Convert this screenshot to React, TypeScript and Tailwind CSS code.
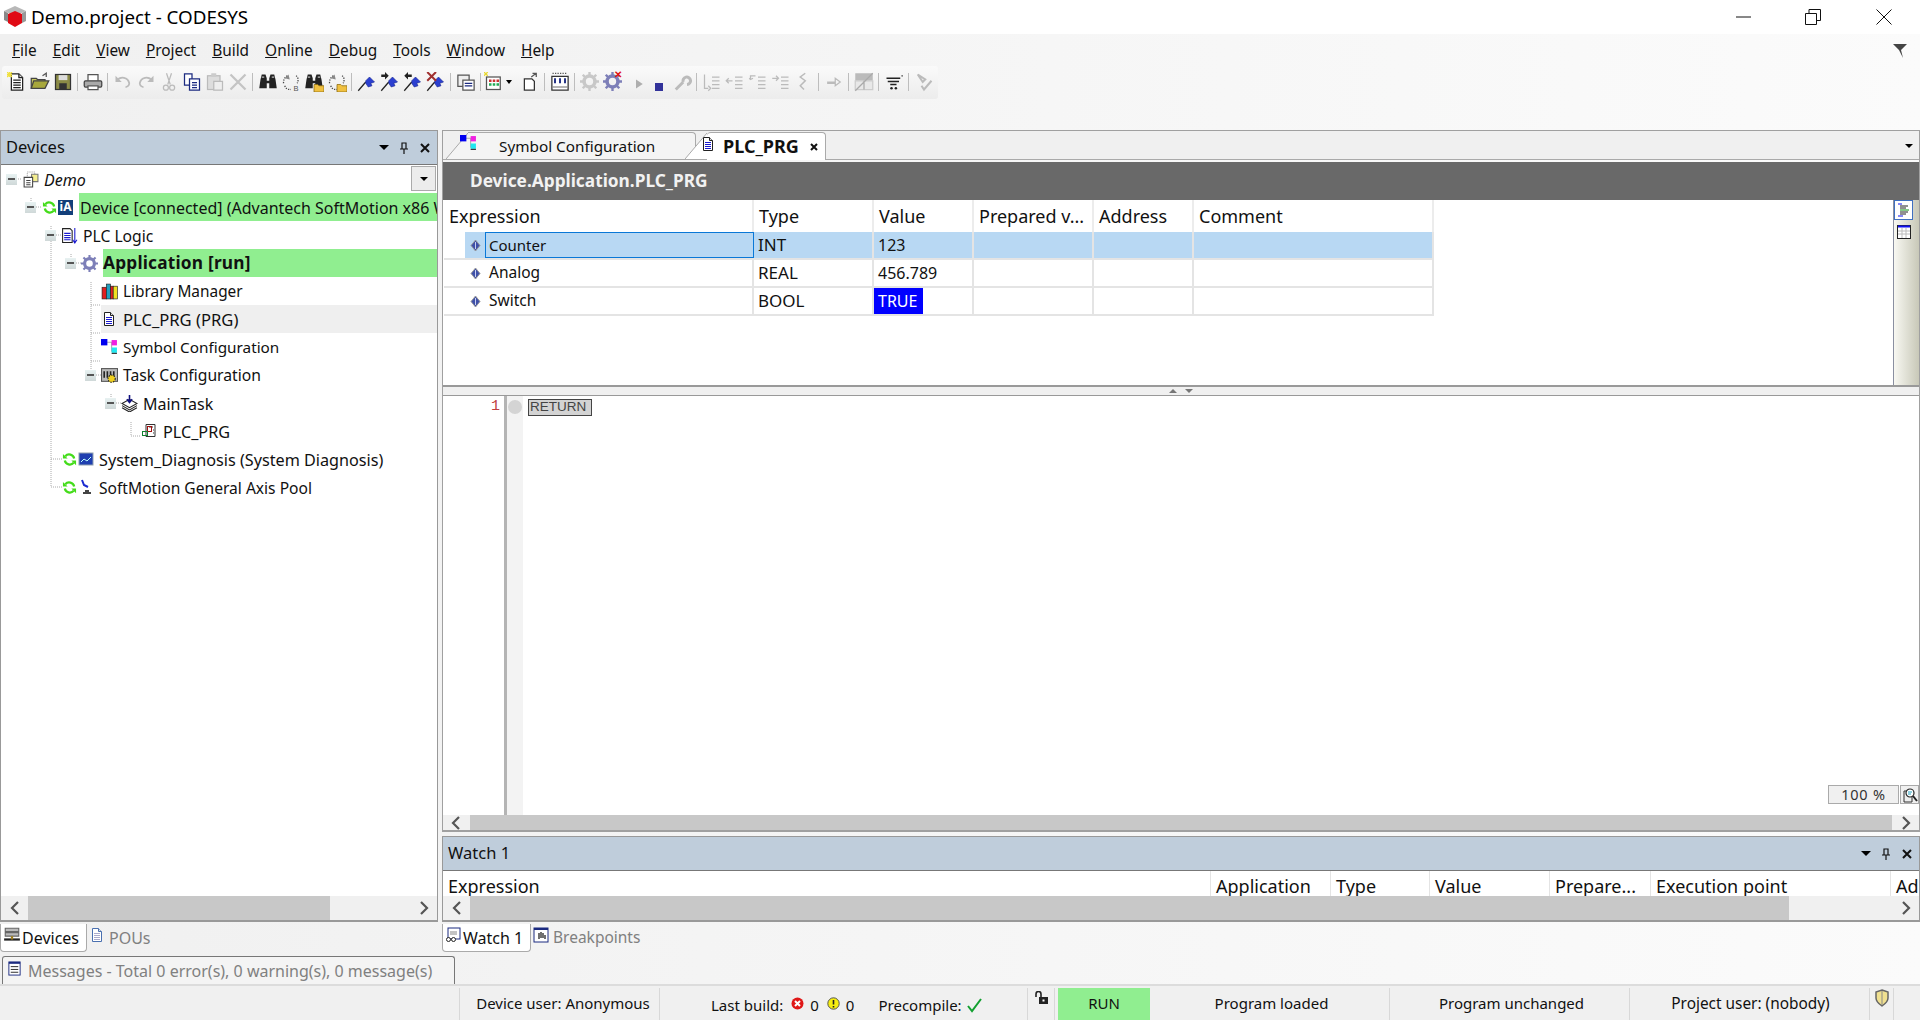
import React, { FC, ReactNode } from "react";

const FONT = "font-['Noto_Sans','Open_Sans',sans-serif]";

const Ic: FC<{ s?: number; children: ReactNode; className?: string }> = ({ s = 16, children, className }) => (
  <svg width={s} height={s} viewBox="0 0 16 16" className={"shrink-0 " + (className ?? "")}>
    {children}
  </svg>
);

const Page: FC<{ stroke?: string; lines?: string }> = ({ stroke = "#222", lines = "#222" }) => (
  <>
    <path d="M3.5 1.5h6l3 3v10h-9z" fill="#fff" stroke={stroke} />
    <path d="M9.5 1.5v3h3" fill="#ddd" stroke={stroke} />
    <path d="M5 6.5h6M5 8.5h6M5 10.5h6M5 12.5h6" stroke={lines} />
  </>
);

const Flag: FC<{ mark?: "next" | "prev" | "x" }> = ({ mark }) => (
  <Ic s={20}>
    <path d="M1 15L7 8" stroke="#222" strokeWidth="1" />
    <path d="M7 7l3-3 4 4-3 1 1 2-3 1-2-3z" fill="#2b3fd0" stroke="#1c2a90" strokeWidth=".5" />
    {mark === "next" && <path d="M1 2h3V0l3 3-3 3V4H1z" fill="#222" />}
    {mark === "prev" && <path d="M7 2H4V0L1 3l3 3V4h3z" fill="#222" />}
    {mark === "x" && <path d="M1 0l7 7M8 0L1 7" stroke="#a03030" strokeWidth="1.6" />}
  </Ic>
);

const Sync: FC = () => (
  <Ic s={15}>
    <path d="M13 7A5.5 5.5 0 0 0 3.5 4.5" fill="none" stroke="#44dc1a" strokeWidth="2.4" />
    <path d="M3 9a5.5 5.5 0 0 0 9.5 2.5" fill="none" stroke="#44dc1a" strokeWidth="2.4" />
    <path d="M1 2v5h5zM15 14V9h-5z" fill="#44dc1a" />
  </Ic>
);

const PageBlue = () => (
  <Ic>
    <Page lines="#1a1ad0" />
  </Ic>
);

const SymbolCfg = () => (
  <Ic s={17}>
    <path d="M4 3h8M10 3v9" stroke="#aaa" fill="none" />
    <rect x="0" y="0" width="6" height="6" fill="#0000f0" />
    <rect x="10" y="1" width="5" height="5" fill="#f020e0" />
    <rect x="10" y="8" width="5" height="5" fill="#20e8f0" />
    <rect x="10" y="13" width="5" height="1" fill="#222" />
  </Ic>
);

const Gear: FC<{ c?: string; s?: number }> = ({ c = "#7d7fb8", s = 17 }) => (
  <Ic s={s}>
    <circle cx="8" cy="8" r="4.6" fill="none" stroke={c} strokeWidth="3" />
    <path d="M8 0v3M8 13v3M0 8h3M13 8h3M2.3 2.3l2 2M11.7 11.7l2 2M2.3 13.7l2-2M11.7 4.3l2-2" stroke={c} strokeWidth="2" />
  </Ic>
);

const Disabled: FC<{ children: ReactNode }> = ({ children }) => <Ic s={20}>{children}</Ic>;

const Binocular: FC<{ folder?: boolean }> = ({ folder }) => (
  <Ic s={20}>
    <path d="M2 6l1-4h3l1 3v2h2V5l1-3h3l1 4 1 7H9V9H7v4H1z" fill="#222" />
    <path d="M3 4h2M11 4h2" stroke="#bbb" />
    {folder && <path d="M8 10h3l1 1h4v5H8z" fill="#f0c040" stroke="#8a6a10" strokeWidth=".6" />}
  </Ic>
);

const DotArrows: FC<{ folder?: boolean }> = ({ folder }) => (
  <Ic s={20}>
    <path d="M2 9c0-4 2-6 4-6M12 3c2 1 2 4 1 6M3 11c1 3 3 3 5 3" fill="none" stroke="#444" strokeDasharray="1 1" />
    <path d="M3 5l3-3 1 4z" fill="#888" />
    {folder ? (
      <path d="M8 10h3l1 1h4v5H8z" fill="#f0c040" stroke="#8a6a10" strokeWidth=".6" />
    ) : (
      <text x="10" y="15" fontSize="6" fill="#555" fontFamily="Liberation Sans">B</text>
    )}
  </Ic>
);

const LinesArrow: FC<{ d: string }> = ({ d }) => (
  <Disabled>
    <path d="M8 4h6M8 7h6M8 10h6M8 13h6" stroke="#bbb" />
    <path d={d} fill="none" stroke="#bbb" />
  </Disabled>
);

const tools: ReactNode[] = [
  <Ic s={20}><Page /><path d="M0 0l4 4M4 0L0 4M2 0v4M0 2h4" stroke="#f0e040" /></Ic>,
  <Ic s={20}><path d="M1 13V5h4l1 1h6v2" fill="#c8c860" stroke="#444" /><path d="M1 13l2-6h12l-3 6z" fill="#a8a83c" stroke="#444" /><path d="M10 3l3-2v3" fill="none" stroke="#555" /></Ic>,
  <Ic s={20}><rect x="2" y="2" width="12" height="12" fill="#8b8b46" stroke="#333" /><rect x="4.5" y="2.5" width="7" height="4" fill="#ddd" /><rect x="5" y="9" width="6" height="5" fill="#333" /></Ic>,
  "sep",
  <Ic s={20}><path d="M4 7V2h8v5" fill="#fff" stroke="#555" /><rect x="1" y="7" width="14" height="5" rx="1" fill="#aaa" stroke="#444" /><path d="M4 11h8v3H4z" fill="#fff" stroke="#555" /></Ic>,
  "sep",
  <Disabled><path d="M3 7c3-4 9-3 10 2 0 2-2 3-3 3" fill="none" stroke="#bbb" strokeWidth="1.4" /><path d="M2 3v5h5z" fill="#bbb" /></Disabled>,
  <Disabled><path d="M13 7c-3-4-9-3-10 2 0 2 2 3 3 3" fill="none" stroke="#bbb" strokeWidth="1.4" /><path d="M14 3v5H9z" fill="#bbb" /></Disabled>,
  <Disabled><path d="M6 1l3 9M10 1L7 10" stroke="#bbb" /><circle cx="5.5" cy="12.5" r="2" fill="none" stroke="#bbb" /><circle cx="10.5" cy="12.5" r="2" fill="none" stroke="#bbb" /></Disabled>,
  <Ic s={20}><path d="M2 1.5h6v9H2z" fill="#fff" stroke="#1b2a80" /><path d="M6 5.5h8v9H6z" fill="#fff" stroke="#1b2a80" /><path d="M8 8.5h4M8 10.5h4M8 12.5h4" stroke="#1b2a80" /></Ic>,
  <Disabled><rect x="2" y="3" width="10" height="11" fill="#ddd" stroke="#bbb" /><rect x="5" y="1" width="4" height="3" fill="#ccc" /><path d="M7 7.5h7v7H7z" fill="#eee" stroke="#bbb" /></Disabled>,
  <Disabled><path d="M2 2l12 12M14 2L2 14" stroke="#c4c4c4" strokeWidth="1.8" /></Disabled>,
  "sep",
  <Binocular />,
  <DotArrows />,
  <Binocular folder />,
  <DotArrows folder />,
  "sep",
  <Flag />,
  <Flag mark="next" />,
  <Flag mark="prev" />,
  <Flag mark="x" />,
  "sep",
  <Ic s={20}><path d="M1.5 2.5h9v9h-9z" fill="#eee" stroke="#555" /><path d="M5.5 6.5h9v8h-9z" fill="#fff" stroke="#555" /><path d="M7 9h6M7 11h6" stroke="#1b2a80" /></Ic>,
  "sep",
  <span className="flex items-center w-[34px]">
    <Ic s={20}><rect x="2" y="4" width="11" height="10" fill="#fff" stroke="#555" /><path d="M4 7h2M7 7h2M10 7h2" stroke="#c33" strokeWidth="2" /><path d="M4 10h2M7 10h2M10 10h2" stroke="#2a5" strokeWidth="2" /><path d="M0 0l3 3M3 0L0 3" stroke="#e8d830" /></Ic>
    <span className="ml-[2px] border-x-[3.5px] border-t-[4px] border-x-transparent border-t-black" />
  </span>,
  <Ic s={20}><path d="M3.5 5.5h6l2 2v7h-8z" fill="#fff" stroke="#333" /><path d="M9 4l4-3M10 1h3v3" fill="none" stroke="#555" /></Ic>,
  "sep",
  <Ic s={20}><rect x="1.5" y="3.5" width="13" height="11" fill="#fff" stroke="#333" /><path d="M4 5v4M8 5v4M12 5v4" stroke="#1b2a80" strokeWidth="1.5" /><path d="M1.5 12h13" stroke="#888" /><path d="M2 1h12" stroke="#555" strokeDasharray="1 1" /></Ic>,
  "sep",
  <Gear c="#c8c8c8" s={19} />,
  <span className="relative flex">
    <Gear s={19} />
    <span className="absolute right-0 top-[-3px] text-[#e01010] text-[10px] leading-none font-bold">✕</span>
  </span>,
  <span className="flex w-[22px] pl-[8px] pt-[5px]"><Ic s={12}><path d="M4 2l9 6-9 6z" fill="#aeaeae" /></Ic></span>,
  <span className="flex items-end w-[20px] h-[18px] justify-center"><span className="block w-[8px] h-[8px] bg-[#32329a]" /></span>,
  <Disabled><path d="M3 14l6-6M9 8a3 3 0 1 1 3 2" fill="none" stroke="#bbb" strokeWidth="2.4" /></Disabled>,
  "sep",
  <LinesArrow d="M2 2v11h3M5 11l2 2-2 2" />,
  <LinesArrow d="M1 7h5M3 5l-2 2 2 2" />,
  <LinesArrow d="M6 3H2v3M1 5l1 1 2-1" />,
  <LinesArrow d="M1 5h5M4 3l2 2-2 2" />,
  <Disabled><path d="M9 1L5 4l4 3-4 4 3 3" fill="none" stroke="#bbb" strokeWidth="1.2" /></Disabled>,
  "sep",
  <Disabled><path d="M3 8h6V5l4 3-4 3V9H3z" fill="none" stroke="#bbb" /></Disabled>,
  "sep",
  <Disabled><path d="M1 1h14v6H1z" fill="#bbb" /><path d="M1 7h14v7H1z" fill="#e8e8e8" stroke="#ccc" /><path d="M1 15L15 1M8 7v7" stroke="#aaa" /></Disabled>,
  "sep",
  <Ic s={20}><path d="M2 5h11M3 7.5h9M5 10h5" stroke="#222" strokeWidth="1.2" /><circle cx="6" cy="13" r="1" fill="#222" /><circle cx="9.5" cy="13" r="1" fill="#222" /><path d="M14 3h1" stroke="#222" /></Ic>,
  "sep",
  <Disabled><path d="M3 2l6 4-2 2zM6 11l2 3 6-7" fill="none" stroke="#bbb" strokeWidth="1.6" /></Disabled>,
];

const Toolbar = () => (
  <div className="flex items-center h-[33px] w-[936px] ml-[2px] pl-[3px] pb-[2px] rounded-[3px] bg-gradient-to-b from-[#fafafa] to-[#ececec]">
    {tools.map((t, i) =>
      t === "sep" ? (
        <span key={i} className="w-[1px] h-[18px] mx-[3px] bg-[#bdbdbd]" />
      ) : (
        <span key={i} className="flex items-center justify-center min-w-[23px] h-[22px]">
          {t}
        </span>
      ),
    )}
  </div>
);

const menus: [string, string][] = [
  ["F", "ile"],
  ["E", "dit"],
  ["V", "iew"],
  ["P", "roject"],
  ["B", "uild"],
  ["O", "nline"],
  ["D", "ebug"],
  ["T", "ools"],
  ["W", "indow"],
  ["H", "elp"],
];

const PanelHeader: FC<{ title: string }> = ({ title }) => (
  <div className="flex items-center h-[34px] bg-[#bfcddb] border-b border-[#777] pl-[5px] pr-[7px] text-[16.5px] text-[#111] shrink-0">
    <span>{title}</span>
    <span className="ml-auto border-x-[5px] border-t-[5px] border-x-transparent border-t-black" />
    <svg width="10" height="12" viewBox="0 0 10 12" className="ml-[10px]">
      <path d="M3 1h4v6H3zM1 7h8M5 7v5" fill="none" stroke="#111" strokeWidth="1.2" />
    </svg>
    <svg width="10" height="10" viewBox="0 0 10 10" className="ml-[11px]">
      <path d="M1 1l8 8M9 1L1 9" stroke="#111" strokeWidth="2" />
    </svg>
  </div>
);

const Expander = () => (
  <span className="flex items-center justify-center w-[11px] h-[11px] bg-gradient-to-b from-[#e8f2f2] to-[#cfd8d8] shrink-0">
    <span className="w-[7px] h-[2px] bg-[#555]" />
  </span>
);

const Tree = () => (
  <div className="relative flex-1 bg-white text-[15.7px] text-[#111]">
    <svg width="436" height="340" className="absolute left-0 top-0 pointer-events-none">
      <g stroke="#aaa" strokeDasharray="1 1" fill="none">
        <path d="M30 33v8M50 61v8M50 70v252M50 322h12M50 294h12" />
        <path d="M70 89v8M90 117v92M90 140h10M90 168h10M90 196h10" />
        <path d="M110 229v8M130 257v14h10" />
        <path d="M15 14h6M35 42h6M55 70h5M75 98h5M95 210h5M115 238h5" />
      </g>
    </svg>
    <div className="relative flex flex-col">
      <div className="relative flex items-center h-[28px] pl-[5px]">
        <Expander />
        <span className="ml-[5px]">
          <Ic s={17}>
            <path d="M5 1h7v7H5z" fill="#fff" stroke="#999" strokeDasharray="1 1" />
            <path d="M9 3h6v7H9z" fill="#f4ee90" stroke="#777" />
            <path d="M2 6h8v9H2z" fill="#fff" stroke="#444" />
            <path d="M4 9h4M4 11h4M4 13h4" stroke="#444" />
          </Ic>
        </span>
        <span className="ml-[5px] pt-[2px] italic text-[16px]">Demo</span>
        <span className="absolute right-[1px] top-[1px] flex items-center justify-center w-[25px] h-[25px] bg-[#ececec] border border-[#aaa]">
          <span className="border-x-[4px] border-t-[4px] border-x-transparent border-t-black" />
        </span>
      </div>
      <div className="flex items-center h-[28px] pl-[24px]">
        <Expander />
        <span className="ml-[6px]"><Sync /></span>
        <span className="flex items-center justify-center w-[15px] h-[15px] ml-[1px] bg-[#123f7a] text-white text-[12px] font-bold leading-none">iA</span>
        <span className="ml-[6px] flex-1 h-full flex items-center bg-[#90ee90] pl-[1px] pt-[2px] text-[16px] whitespace-nowrap overflow-hidden">
          Device [connected] (Advantech SoftMotion x86 Win)
        </span>
      </div>
      <div className="flex items-center h-[28px] pl-[44px]">
        <Expander />
        <span className="ml-[5px]">
          <Ic s={17}>
            <path d="M1.5 1.5h7l2 2v11h-9z" fill="#fff" stroke="#222" />
            <path d="M3 6h6M3 8h6M3 10h6M3 12h6" stroke="#1a1ad0" />
            <path d="M13 1v13M11 12l2 3 2-3" fill="none" stroke="#1a1ad0" />
          </Ic>
        </span>
        <span className="ml-[5px] pt-[3px]">PLC Logic</span>
      </div>
      <div className="flex items-center h-[28px] pl-[64px]">
        <Expander />
        <span className="ml-[5px]"><Gear /></span>
        <span className="ml-[5px] flex-1 h-full flex items-center bg-[#90ee90] text-[17.3px] tracking-[0.2px] font-bold">Application [run]</span>
      </div>
      <div className="flex items-center h-[28px] pl-[100px]">
        <Ic s={17}>
          <rect x="1" y="4" width="4" height="11" fill="#e02020" stroke="#222" strokeWidth=".6" />
          <rect x="5" y="1" width="4" height="14" fill="#20a0c0" stroke="#222" strokeWidth=".6" />
          <rect x="9" y="3" width="2.5" height="12" fill="#e02020" stroke="#222" strokeWidth=".6" />
          <rect x="11.5" y="3" width="4" height="12" fill="#f0e020" stroke="#222" strokeWidth=".6" />
        </Ic>
        <span className="ml-[5px] pt-[2px] text-[15.4px]">Library Manager</span>
      </div>
      <div className="flex items-center h-[28px] ml-[100px] bg-[#efefef]">
        <PageBlue />
        <span className="ml-[6px] pt-[2px] text-[16.6px]">PLC_PRG (PRG)</span>
      </div>
      <div className="flex items-center h-[28px] pl-[100px]">
        <SymbolCfg />
        <span className="ml-[5px] text-[15.3px]">Symbol Configuration</span>
      </div>
      <div className="flex items-center h-[28px] pl-[84px]">
        <Expander />
        <span className="ml-[5px]">
          <Ic s={17}>
            <rect x="0.5" y="1.5" width="15" height="12" fill="#bbb" stroke="#555" />
            <path d="M3 4v6M6 4v6M9 4v6M12 4v6" stroke="#222" strokeWidth="1.5" />
            <circle cx="10" cy="11" r="3.4" fill="#f0d020" stroke="#222" strokeDasharray="1.5 1" />
          </Ic>
        </span>
        <span className="ml-[5px] pt-[2px]">Task Configuration</span>
      </div>
      <div className="flex items-center h-[28px] pl-[104px]">
        <Expander />
        <span className="ml-[5px]">
          <Ic s={17}>
            <path d="M1 8l7-4 7 4-7 4z" fill="#fff" stroke="#222" />
            <path d="M1 10l7 4 7-4M1 12l7 4 7-4" fill="none" stroke="#222" />
            <path d="M8 0v6M5.5 4L8 7l2.5-3" fill="none" stroke="#101080" strokeWidth="1.5" />
          </Ic>
        </span>
        <span className="ml-[5px] pt-[2px] text-[16px]">MainTask</span>
      </div>
      <div className="flex items-center h-[28px] pl-[140px]">
        <Ic>
          <path d="M5 1.5h9v12H5z" fill="#fff" stroke="#333" />
          <path d="M8 4h4M12 7h1M12 10h1" stroke="#333" />
          <rect x="6.5" y="3.5" width="4" height="5" fill="none" stroke="#a01010" />
          <rect x="1.5" y="8.5" width="5" height="4" fill="none" stroke="#108030" />
        </Ic>
        <span className="ml-[6px] pt-[2px] text-[16.2px]">PLC_PRG</span>
      </div>
      <div className="flex items-center h-[28px] pl-[61px]">
        <Sync />
        <span className="ml-[1px]">
          <Ic>
            <rect x="1" y="2" width="14" height="12" fill="#1f3fb0" stroke="#8fa0b0" />
            <path d="M3 11l3-3 3 2 4-4" fill="none" stroke="#bff" />
          </Ic>
        </span>
        <span className="ml-[5px] pt-[2px] text-[16.2px]">System_Diagnosis (System Diagnosis)</span>
      </div>
      <div className="flex items-center h-[28px] pl-[61px]">
        <Sync />
        <span className="ml-[1px]">
          <Ic>
            <path d="M4 1l2 5 4 2" fill="none" stroke="#1a2ad0" strokeWidth="2" />
            <path d="M7 11h4v2H7zM5 13h8v2H5z" fill="#444" />
          </Ic>
        </span>
        <span className="ml-[5px] pt-[3px] text-[15.6px]">SoftMotion General Axis Pool</span>
      </div>
    </div>
  </div>
);

const Chevron: FC<{ left?: boolean }> = ({ left }) => (
  <svg width="10" height="14" viewBox="0 0 10 14" className="shrink-0">
    <path d={left ? "M8 1L2 7l6 6" : "M2 1l6 6-6 6"} fill="none" stroke="#555" strokeWidth="2.2" />
  </svg>
);

const ScrollH: FC<{ thumb: string; h?: string }> = ({ thumb, h = "h-[24px]" }) => (
  <div className={"flex items-stretch bg-[#f0f0f0] shrink-0 " + h}>
    <span className="flex items-center justify-center w-[27px]"><Chevron left /></span>
    <span className={"bg-[#c8c8c8] " + thumb} />
    <span className="flex-1" />
    <span className="flex items-center justify-center w-[27px]"><Chevron /></span>
  </div>
);

const Diamond = () => (
  <svg width="11" height="13" viewBox="0 0 11 13" className="shrink-0">
    <path d="M5.5 1L10 6.5 5.5 12 1 6.5z" fill="#3f50a8" stroke="#9a9a9a" />
    <path d="M5.5 3v7" stroke="#c8d0f0" />
  </svg>
);

const HeadCell: FC<{ children: ReactNode }> = ({ children }) => (
  <div className="flex items-center h-[32px] pl-[5px] border-r-2 border-[#ececec] text-[18px] text-[#111] whitespace-nowrap overflow-hidden">
    {children}
  </div>
);

const Cell: FC<{ children?: ReactNode; hi?: boolean; big?: boolean }> = ({ children, hi, big }) => (
  <div className={"flex items-center h-[28px] pl-[4px] border-r-2 border-b-2 border-[#e4e4e4] text-[#111] " + (big ? "text-[17px] " : "text-[16px] ") + (hi ? "bg-[#b8d8f3]" : "")}>
    {children}
  </div>
);

const Table = () => (
  <div className="grid grid-cols-[310px_120px_100px_120px_100px_240px] w-[990px] ml-[1px] content-start">
    {["Expression", "Type", "Value", "Prepared v...", "Address", "Comment"].map((h) => (
      <HeadCell key={h}>{h}</HeadCell>
    ))}
    <div className="flex items-center h-[28px] pl-[21px] border-b-2 border-[#e4e4e4]">
      <div className="flex items-center h-full w-full bg-[#b8d8f3]">
        <span className="w-[20px] flex justify-center"><Diamond /></span>
        <span className="flex-1 flex items-center h-full pl-[3px] border border-[#0a78d7] text-[15px] text-[#111]">Counter</span>
      </div>
    </div>
    <Cell hi big>INT</Cell>
    <Cell hi>123</Cell>
    <Cell hi />
    <Cell hi />
    <Cell hi />
    <div className="flex items-center h-[28px] pl-[21px] border-b-2 border-r-2 border-[#e4e4e4] text-[15.5px] text-[#111]">
      <span className="w-[20px] flex justify-center"><Diamond /></span>
      <span className="pl-[4px]">Analog</span>
    </div>
    <Cell big>REAL</Cell>
    <Cell>456.789</Cell>
    <Cell />
    <Cell />
    <Cell />
    <div className="flex items-center h-[28px] pl-[21px] border-b-2 border-r-2 border-[#e4e4e4] text-[15.5px] text-[#111]">
      <span className="w-[20px] flex justify-center"><Diamond /></span>
      <span className="pl-[4px]">Switch</span>
    </div>
    <Cell big>BOOL</Cell>
    <div className="flex items-center h-[28px] border-r-2 border-b-2 border-[#e4e4e4] text-[16px]">
      <span className="flex items-center h-full w-[49px] pl-[4px] bg-[#0000ff] text-white">TRUE</span>
    </div>
    <Cell />
    <Cell />
    <Cell />
  </div>
);

const Editor = () => (
  <div className="flex flex-col h-[702px] border border-[#a0a0a0] border-b-2">
    <div className="flex items-end h-[29px] pl-[3px] border-b border-[#aaa] bg-[#f0f0f0] shrink-0">
      <svg width="22" height="27" viewBox="0 0 22 27" className="shrink-0">
        <path d="M0 27L22 1V27z" fill="#f4f4f4" />
        <path d="M0 27L22 1" stroke="#aaa" fill="none" />
      </svg>
      <div className="flex items-center h-[27px] w-[228px] bg-[#f4f4f4] border-t border-r border-[#aaa] rounded-tr-[4px] text-[15.3px] text-[#111]">
        <span className="-ml-[8px] -mt-[6px]"><SymbolCfg /></span>
        <span className="ml-[22px] pt-[1px]">Symbol Configuration</span>
      </div>
      <svg width="22" height="27" viewBox="0 0 22 27" className="relative shrink-0 -ml-[11px]">
        <path d="M0 27L22 1V27z" fill="#fff" />
        <path d="M0 27L22 1" stroke="#aaa" fill="none" />
      </svg>
      <div className="relative flex items-center h-[28px] w-[119px] -mb-[1px] bg-white border-t border-r border-[#aaa] rounded-t-[4px] text-[18px] font-bold text-[#111]">
        <span className="-ml-[7px] -mt-[6px]"><PageBlue /></span>
        <span className="ml-[7px]">PLC_PRG</span>
        <svg width="10" height="10" viewBox="0 0 10 10" className="ml-[10px]">
          <path d="M2 2l6 6M8 2L2 8" stroke="#111" strokeWidth="2" />
        </svg>
      </div>
      <span className="ml-auto mb-[11px] mr-[6px] border-x-[4px] border-t-[4px] border-x-transparent border-t-black" />
    </div>
    <div className="flex items-center h-[38px] mt-[2px] pl-[27px] pb-[1px] bg-[#696969] text-[17.3px] font-bold text-[#f2f2f2] shrink-0">
      Device.Application.PLC_PRG
    </div>
    <div className="flex h-[187px] border-b-2 border-[#999] shrink-0 bg-white">
      <Table />
      <div className="ml-auto flex flex-col items-start w-[26px] h-full border-l border-[#8a8fa0] bg-gradient-to-r from-[#f8f8f2] to-[#c8c8b8] gap-[5px]">
        <span className="flex items-center justify-center w-[19px] h-[20px] border border-[#4070c0] bg-white">
          <svg width="13" height="14" viewBox="0 0 13 14">
            <path d="M1 1h4M1 13h5" stroke="#1010f0" />
            <path d="M3 3h8M3 5h6M3 9h8M3 11h6" stroke="#222" />
            <path d="M3 7h9" stroke="#109010" />
          </svg>
        </span>
        <svg width="14" height="14" viewBox="0 0 14 14" className="ml-[3px]">
          <rect x="0.5" y="0.5" width="13" height="13" fill="#fff" stroke="#222" />
          <path d="M1 1.5h12" stroke="#1010f0" strokeWidth="2" />
          <path d="M1 6h12M1 9h12M5 3v10M9 3v10" stroke="#bbb" />
        </svg>
      </div>
    </div>
    <div className="flex items-center justify-center gap-[8px] h-[9px] bg-[#f0f0f0] border-b border-[#999] shrink-0">
      <span className="border-x-[4px] border-b-[4px] border-x-transparent border-b-[#777]" />
      <span className="border-x-[4px] border-t-[4px] border-x-transparent border-t-[#777]" />
    </div>
    <div className="relative flex flex-1 bg-white">
      <div className="w-[61px] pt-[2px] pr-[4px] text-right text-[15px] leading-[18px] text-[#c04040] font-['Liberation_Mono',monospace] shrink-0">1</div>
      <div className="w-[3px] bg-[#b4b4b4]" />
      <div className="flex justify-center w-[16px] pt-[4px] bg-[#f3f3f3]">
        <span className="w-[14px] h-[14px] rounded-full bg-[#d4d4d4]" />
      </div>
      <div className="pl-[5px] pt-[3px]">
        <span className="flex items-center pl-[1px] w-[64px] h-[17px] bg-[#d3d3d3] border border-[#444] text-[13.5px] text-[#444] font-['Liberation_Sans',sans-serif]">RETURN</span>
      </div>
      <div className="absolute right-0 bottom-[11px] flex items-center gap-[1px]">
        <span className="flex items-center justify-center w-[71px] h-[19px] bg-[#f0f0f0] border border-[#aaa] text-[14.5px] text-[#333] tracking-[0.8px]">100 %</span>
        <span className="flex items-center justify-center w-[19px] h-[19px] bg-[#f0f0f0] border border-[#aaa]">
          <svg width="16" height="16" viewBox="0 0 16 16">
            <path d="M2 4h8v11H2z" fill="#eee" stroke="#333" />
            <circle cx="8" cy="6" r="4" fill="#fff" stroke="#222" strokeWidth="1.2" />
            <path d="M6 5h4M6 7h3" stroke="#20a0c0" />
            <path d="M11 9l4 5" stroke="#222" strokeWidth="2" />
          </svg>
        </span>
      </div>
    </div>
    <ScrollH thumb="w-[1425px]" h="h-[15px]" />
  </div>
);

const Watch = () => (
  <div className="flex flex-col h-[86px] border border-[#999] border-b-2 overflow-hidden">
    <PanelHeader title="Watch 1" />
    <div className="flex bg-white h-[25px] text-[18px] text-[#111] overflow-hidden whitespace-nowrap leading-[30px]">
      <span className="w-[768px] pl-[5px] border-r border-[#e4e4e4] shrink-0">Expression</span>
      <span className="w-[120px] pl-[5px] border-r border-[#e4e4e4] shrink-0">Application</span>
      <span className="w-[99px] pl-[5px] border-r border-[#e4e4e4] shrink-0">Type</span>
      <span className="w-[120px] pl-[5px] border-r border-[#e4e4e4] shrink-0">Value</span>
      <span className="w-[101px] pl-[5px] border-r border-[#e4e4e4] shrink-0">Prepare...</span>
      <span className="w-[240px] pl-[5px] border-r border-[#e4e4e4] shrink-0">Execution point</span>
      <span className="pl-[5px]">Ad</span>
    </div>
    <ScrollH thumb="w-[1319px]" />
  </div>
);

const BottomTab: FC<{ active?: boolean; icon: ReactNode; label: string; w: string; labelClass?: string }> = ({ active, icon, label, w, labelClass }) => (
  <div
    className={
      "flex h-[28px] text-[16px] " + w + " " +
      (active ? "bg-white border-x border-b border-[#aaa] rounded-b-[4px] text-[#111] items-center" : "text-[#808080] items-center")
    }
  >
    <span className="-mt-[6px] ml-[2px]">{icon}</span>
    <span className={labelClass ?? "ml-[1px]"}>{label}</span>
  </div>
);

const Status = () => (
  <div className="flex h-[36px] pt-[2px] border-t-2 border-[#dcdcdc] bg-[#f0f0f0] text-[15px] text-[#111] shrink-0">
    <div className="w-[460px] border-r border-[#d8d8d8]" />
    <div className="flex items-center justify-center w-[200px] pl-[7px] pb-[2px] border-r border-[#d8d8d8]">Device user: Anonymous</div>
    <div className="flex items-center w-[368px] pl-[51px] pt-[2px] border-r border-[#d8d8d8]">
      <span>Last build:</span>
      <span className="ml-[8px] -mt-[4px]">
        <svg width="13" height="13" viewBox="0 0 13 13">
          <circle cx="6.5" cy="6.5" r="6" fill="#e01818" />
          <path d="M4 4l5 5M9 4l-5 5" stroke="#fff" strokeWidth="2" />
        </svg>
      </span>
      <span className="ml-[6px]">0</span>
      <span className="ml-[8px] -mt-[4px]">
        <svg width="13" height="13" viewBox="0 0 13 13">
          <circle cx="6.5" cy="6.5" r="5.7" fill="#f6ee10" stroke="#555" />
          <path d="M6.5 3v4.5M6.5 9v1.5" stroke="#222" strokeWidth="1.6" />
        </svg>
      </span>
      <span className="ml-[6px]">0</span>
      <span className="ml-[24px]">Precompile:</span>
      <span className="ml-[5px]">
        <svg width="16" height="16" viewBox="0 0 16 16">
          <path d="M1 9l4 5 9-12" fill="none" stroke="#12a030" strokeWidth="2" />
        </svg>
      </span>
    </div>
    <div className="flex justify-center w-[27px] pt-[3px] border-r border-[#d8d8d8]">
      <svg width="13" height="14" viewBox="0 0 13 14">
        <path d="M1 6V3a2.4 2.4 0 0 1 5 0v3" fill="none" stroke="#222" strokeWidth="1.6" />
        <rect x="4" y="6" width="9" height="7" fill="#222" />
        <rect x="7.5" y="8.5" width="2" height="2" fill="#fff" />
      </svg>
    </div>
    <div className="flex items-center justify-center w-[92px] ml-[3px] pb-[2px] bg-[#90ee90]">RUN</div>
    <div className="flex items-center justify-center w-[240px] pl-[4px] pb-[2px] border-r border-[#d8d8d8]">Program loaded</div>
    <div className="flex items-center justify-center w-[240px] pl-[4px] pb-[2px] border-r border-[#d8d8d8]">Program unchanged</div>
    <div className="flex items-center justify-center w-[240px] pl-[2px] border-r border-[#d8d8d8] text-[15.4px]">Project user: (nobody)</div>
    <div className="flex justify-center w-[24px] pt-[1px] border-r border-[#d8d8d8]">
      <svg width="14" height="18" viewBox="0 0 14 18">
        <path d="M7 1l6 2v6c0 4-3 6-6 8-3-2-6-4-6-8V3z" fill="#f0e090" stroke="#666" strokeWidth="1.5" />
        <path d="M7 2v14" stroke="#888" />
      </svg>
    </div>
  </div>
);

const App = () => {
  return (
    <div className={"flex flex-col w-[1920px] h-[1020px] overflow-hidden bg-gradient-to-r from-[#f0f0f0] to-[#fbfbfb] " + FONT}>
      <div className="flex items-center h-[34px] bg-white shrink-0">
        <svg width="26" height="26" viewBox="0 0 26 26" className="ml-[2px]">
          <path d="M13 2l11 5-11 5L2 7z" fill="#b8b8b8" />
          <path d="M24 7v10l-4 2V9z" fill="#999" />
          <path d="M2 7l4 2v9l-4-2z" fill="#888" />
          <path d="M6 10l7-3 7 3v9l-7 4-7-4z" fill="#e00a14" />
        </svg>
        <span className="ml-[3px] text-[18.8px] text-black">Demo.project - CODESYS</span>
        <div className="ml-auto flex items-center h-full">
          <svg width="16" height="16" viewBox="0 0 16 16" className="mr-[53px]"><path d="M0 8h15" stroke="#111" /></svg>
          <svg width="16" height="16" viewBox="0 0 16 16" className="mr-[55px]"><path d="M.5 4.5h11v11H.5zM4 4V.5h11.5v11H12" fill="none" stroke="#111" /></svg>
          <svg width="16" height="16" viewBox="0 0 16 16" className="mr-[28px]"><path d="M.5.5l15 15M15.5.5l-15 15" stroke="#111" /></svg>
        </div>
      </div>
      <div className="flex items-center h-[32px] pl-[12px] pt-[1px] gap-[16px] text-[15.4px] text-[#111] shrink-0">
        {menus.map(([a, b]) => (
          <span key={a + b}>
            <u>{a}</u>
            {b}
          </span>
        ))}
        <svg width="16" height="16" viewBox="0 0 16 16" className="ml-auto mr-[12px]">
          <path d="M1 1h14L9 7l2 8-4-8z" fill="#444" />
        </svg>
      </div>
      <div className="h-[32px] shrink-0"><Toolbar /></div>
      <div className="h-[32px] shrink-0" />
      <div className="flex gap-[4px] h-[822px] shrink-0">
        <div className="flex flex-col w-[438px] shrink-0">
          <div className="flex flex-col h-[792px] border border-[#999] border-b-2">
            <PanelHeader title="Devices" />
            <Tree />
            <ScrollH thumb="w-[302px]" />
          </div>
          <div className="flex mt-[2px]">
            <BottomTab
              active
              w="w-[87px]"
              label="Devices"
              icon={
                <Ic s={18}>
                  <path d="M2 2h12v3H2zM2 6h12v3H2z" fill="#bbb" stroke="#666" />
                  <path d="M1 12h14" stroke="#222" strokeWidth="2" />
                  <path d="M8 9v3" stroke="#a08020" strokeWidth="2" />
                </Ic>
              }
            />
            <BottomTab
              w="w-[90px]"
              label="POUs"
              labelClass="ml-[4px]"
              icon={<Ic s={16}><Page stroke="#4a70b0" lines="#aac" /></Ic>}
            />
          </div>
        </div>
        <div className="flex flex-col flex-1 min-w-0">
          <Editor />
          <div className="h-[4px]" />
          <Watch />
          <div className="flex mt-[2px]">
            <BottomTab
              active
              w="w-[89px]"
              label="Watch 1"
              labelClass="ml-[2px]"
              icon={
                <Ic s={16}>
                  <rect x="3" y="1" width="12" height="11" fill="#fff" stroke="#1b2a80" />
                  <path d="M5 5h7M5 7h7" stroke="#888" />
                  <circle cx="3.5" cy="12.5" r="2" fill="#fff" stroke="#222" />
                  <circle cx="8.5" cy="12.5" r="2" fill="#fff" stroke="#222" />
                </Ic>
              }
            />
            <BottomTab
              w="w-[110px]"
              label="Breakpoints"
              labelClass="ml-[4px] text-[15.5px]"
              icon={
                <Ic s={16}>
                  <rect x="1" y="1" width="14" height="14" fill="#fff" stroke="#1b2a80" />
                  <path d="M1 2h14" stroke="#1b2a80" strokeWidth="2" />
                  <path d="M6 12V6M8 11V5M10 11V6M12 12V8" stroke="#222" strokeWidth="1.3" />
                </Ic>
              }
            />
          </div>
        </div>
      </div>
      <div className="flex items-end h-[32px] pl-[2px] shrink-0">
        <div className="flex items-center h-[28px] w-[453px] bg-[#f4f4f4] border-x border-t border-[#777] rounded-t-[3px] text-[16px] text-[#808080]">
          <span className="ml-[4px] -mt-[5px]">
            <Ic s={15}>
              <rect x="2" y="1" width="12" height="14" fill="#fff" stroke="#1b2a80" />
              <path d="M2 2h12" stroke="#1b2a80" strokeWidth="2" />
              <path d="M4 6h8M4 9h8M4 12h8" stroke="#222" />
            </Ic>
          </span>
          <span className="ml-[6px] whitespace-nowrap">Messages - Total 0 error(s), 0 warning(s), 0 message(s)</span>
        </div>
      </div>
      <Status />
    </div>
  );
};

export default App;
